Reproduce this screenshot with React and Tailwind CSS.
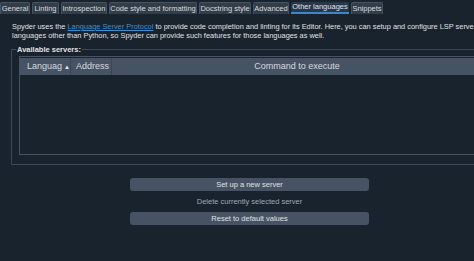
import React from "react";

const tabs = [
  { label: "General", w: "w-[30px]" },
  { label: "Linting", w: "w-[27px]" },
  { label: "Introspection", w: "w-[46px]" },
  { label: "Code style and formatting", w: "w-[88px]" },
  { label: "Docstring style", w: "w-[52px]" },
  { label: "Advanced", w: "w-[36px]" },
  { label: "Other languages", w: "w-[58px]", active: true },
  { label: "Snippets", w: "w-[32px]" },
];

function Tab({ label, w, active }) {
  return (
    <div
      className={`${w} h-[12px] flex items-center justify-center whitespace-nowrap overflow-hidden text-[7.5px] leading-none rounded-t-[2px] ${
        active
          ? "bg-[#26384b] text-[#e0e1e3] border-b-2 border-[#3a87cc]"
          : "bg-[#323d4a] text-[#d8dadd] border border-[#455364] border-b-0"
      }`}
    >
      {label}
    </div>
  );
}

function App() {
  return (
    <div
      className="w-[474px] h-[261px] overflow-hidden bg-[#19232d] text-[#e0e1e3] flex flex-col"
      style={{ fontFamily: '"Liberation Sans", Arial, sans-serif' }}
    >
      {/* Tab bar */}
      <div className="flex gap-[2px] pt-[2px] h-[15px]">
        {tabs.map((t) => (
          <Tab key={t.label} {...t} />
        ))}
      </div>

      {/* Intro */}
      <p className="pl-[12px] pt-[7px] text-[7.4px] leading-[9px] whitespace-nowrap">
        Spyder uses the{" "}
        <span className="text-[#3b8fd6] underline">Language Server Protocol</span>{" "}
        to provide code completion and linting for its Editor. Here, you can setup and
        configure LSP servers
        <br />
        languages other than Python, so Spyder can provide such features for those
        languages as well.
      </p>

      {/* Group box */}
      <fieldset className="ml-[11px] mt-[5px] w-[480px] h-[120px] border border-[#3b4856] px-[7px] pb-[7px]">
        <legend className="-ml-[3px] px-[1px] text-[7.5px] font-bold leading-[9px] text-[#e0e1e3]">
          Available servers:
        </legend>
        <div className="mt-[2px] h-[99px] border border-[#455364] pt-[1px] flex flex-col">
          <div className="flex h-[17px] bg-[#455364] text-[#d6dade] text-[9px] leading-none">
            <div className="w-[51px] flex items-center pl-[7px] border-r border-[#3a4654]">
              Languag
              <span className="ml-[2px] text-[6px] text-[#e8eaec]">▲</span>
            </div>
            <div className="w-[41px] flex items-center pl-[5px] border-r border-[#3a4654]">
              Address
            </div>
            <div className="flex-1 flex items-center justify-center">
              Command to execute
            </div>
          </div>
          <div className="flex-1" />
        </div>
      </fieldset>

      {/* Buttons */}
      <div className="ml-[130px] mt-[13px] w-[239px] flex flex-col gap-[4px] text-[7.5px] leading-none">
        <div className="h-[13px] rounded-[3px] bg-[#455364] flex items-center justify-center text-[#e0e1e3]">
          Set up a new server
        </div>
        <div className="h-[13px] flex items-center justify-center text-[#9da9b5]">
          Delete currently selected server
        </div>
        <div className="h-[13px] rounded-[3px] bg-[#455364] flex items-center justify-center text-[#e0e1e3]">
          Reset to default values
        </div>
      </div>
    </div>
  );
}

export default App;
